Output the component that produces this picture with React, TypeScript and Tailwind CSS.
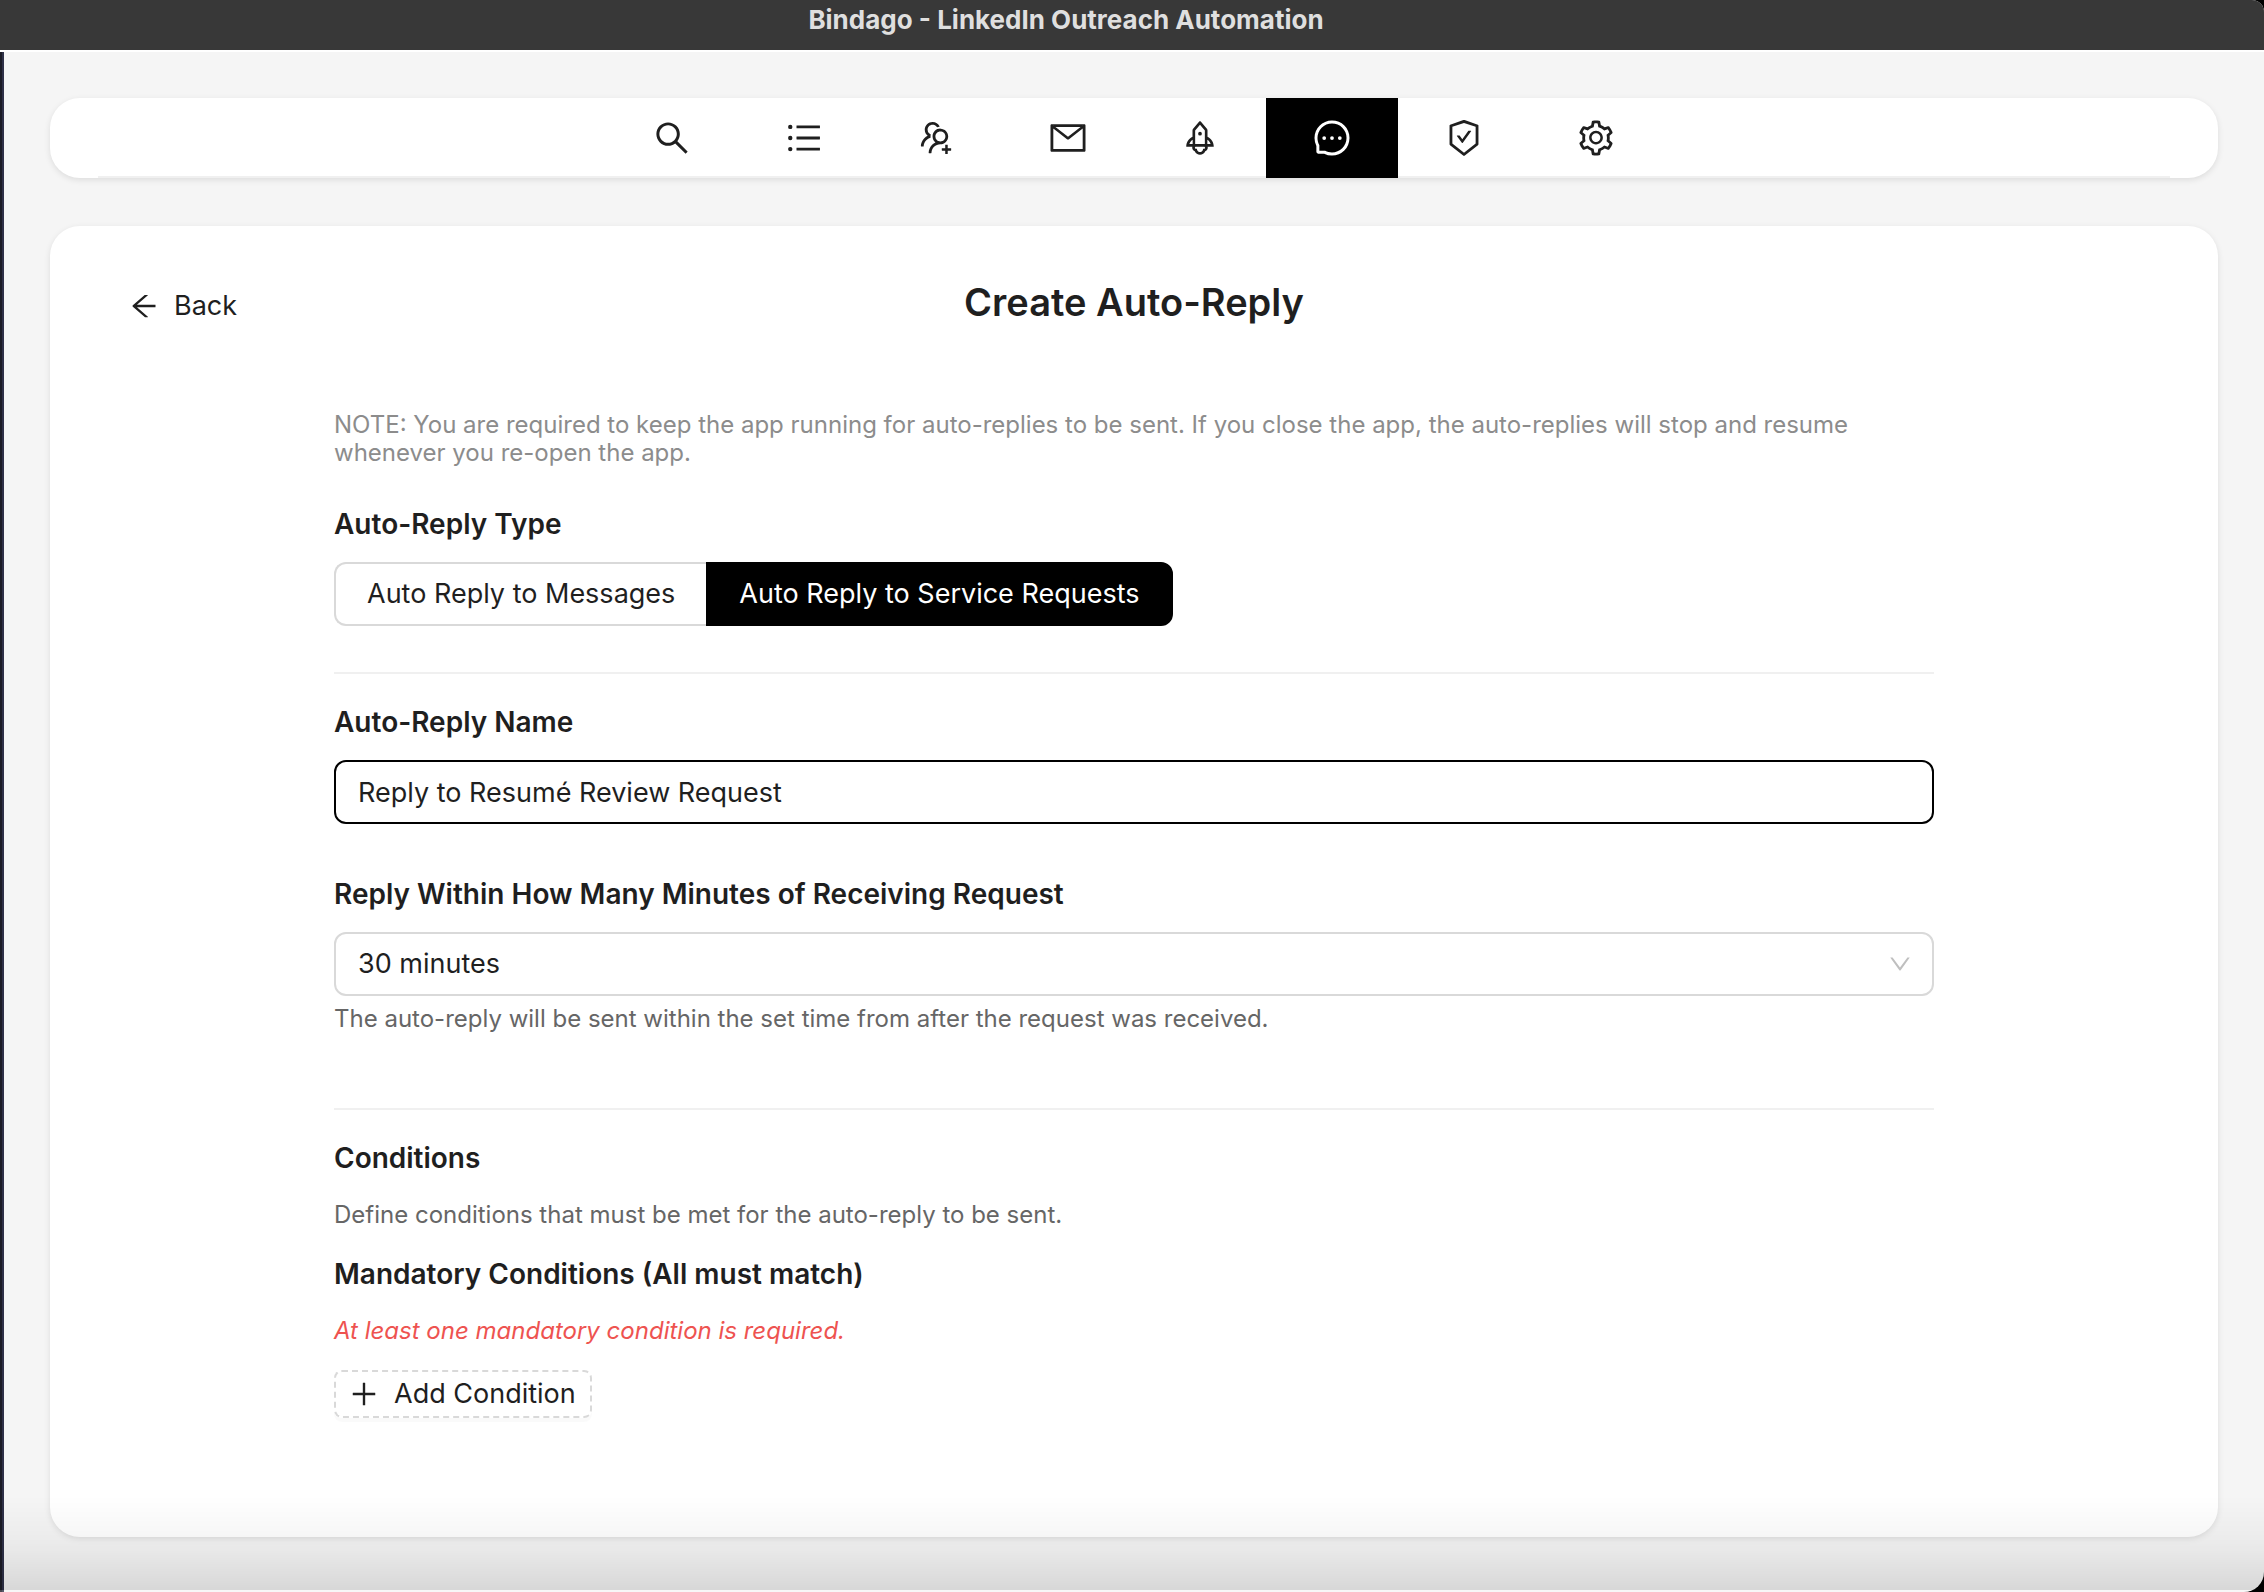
import { useState } from "react";
import type { ReactNode } from "react";
import {
  AiOutlineArrowLeft,
  AiOutlineDown,
  AiOutlineMail,
  AiOutlineMessage,
  AiOutlinePlus,
  AiOutlineRocket,
  AiOutlineSafetyCertificate,
  AiOutlineSearch,
  AiOutlineSetting,
  AiOutlineUnorderedList,
  AiOutlineUsergroupAdd,
} from "react-icons/ai";

const tabs = [
  { label: "Search", Icon: AiOutlineSearch },
  { label: "Lists", Icon: AiOutlineUnorderedList },
  { label: "Connections", Icon: AiOutlineUsergroupAdd },
  { label: "Mail", Icon: AiOutlineMail },
  { label: "Campaigns", Icon: AiOutlineRocket },
  { label: "Auto-Replies", Icon: AiOutlineMessage },
  { label: "Safety", Icon: AiOutlineSafetyCertificate },
  { label: "Settings", Icon: AiOutlineSetting },
];

function TopNav() {
  const [active, setActive] = useState("Auto-Replies");
  return (
    <nav className="rounded-[30px] bg-white px-12 shadow-[0_2px_6px_rgba(0,0,0,0.1)]">
      <div className="flex h-20 justify-center shadow-[inset_0_-2px_0_#f0f0f0]">
        {tabs.map(({ label, Icon }) => (
          <button
            key={label}
            type="button"
            aria-label={label}
            onClick={() => setActive(label)}
            className={
              label === active
                ? "flex w-33 items-center justify-center bg-black text-white"
                : "flex w-33 items-center justify-center text-[#1f1f1f]"
            }
          >
            <Icon className="size-10" />
          </button>
        ))}
      </div>
    </nav>
  );
}

function FieldLabel({ htmlFor, children }: { htmlFor: string; children: ReactNode }) {
  return (
    <label htmlFor={htmlFor} className="block text-[28px] leading-11 font-semibold">
      {children}
    </label>
  );
}

function TypeOption({ name, checked, onSelect }: { name: string; checked: boolean; onSelect: () => void }) {
  return (
    <label
      className={
        checked
          ? "flex items-center border-2 border-black bg-black px-[31px] text-white first:rounded-l-xl last:rounded-r-xl"
          : "flex items-center border-2 border-[#d9d9d9] bg-white px-[31px] first:rounded-l-xl first:border-r-0 last:rounded-r-xl last:border-l-0"
      }
    >
      <input type="radio" name="reply-type" className="sr-only" checked={checked} onChange={onSelect} />
      {name}
    </label>
  );
}

export default function App() {
  const types = ["Auto Reply to Messages", "Auto Reply to Service Requests"];
  const [type, setType] = useState(types[1]);
  const [name, setName] = useState("Reply to Resumé Review Request");

  return (
    <div className="bg-black font-['Inter',sans-serif] text-[27px] text-[#1f1f1f]">
      <div className="relative flex min-h-screen flex-col overflow-hidden rounded-tr-xl rounded-br-[20px] bg-[#f5f5f5]">
        <header className="flex h-[50px] justify-center bg-[#383838] pr-33 text-[26px] leading-10 font-bold text-[#dfdfdf]">
          Bindago - LinkedIn Outreach Automation
        </header>

        <div className="flex flex-1 flex-col gap-12 border-t-2 border-white pt-[46px] pr-[46px] pb-[55px] pl-[50px]">
          <TopNav />

          <main className="flex-1 rounded-[30px] bg-white px-[78px] pt-11 shadow-[0_2px_6px_rgba(0,0,0,0.1)]">
            <div className="grid grid-cols-3 items-center">
              <button type="button" className="mt-2 flex items-center gap-3.5 justify-self-start">
                <AiOutlineArrowLeft className="size-8" />
                Back
              </button>
              <h1 className="text-center text-[38px] leading-16 font-semibold">Create Auto-Reply</h1>
            </div>

            <div className="mx-auto mt-[77px] max-w-[1600px]">
              <p className="text-2xl leading-7 text-[#8c8c8c]">
                NOTE: You are required to keep the app running for auto-replies to be sent. If you close the app, the
                auto-replies will stop and resume whenever you re-open the app.
              </p>

              <fieldset className="mt-[35px]">
                <legend className="text-[28px] leading-11 font-semibold">Auto-Reply Type</legend>
                <div className="mt-4 flex h-16">
                  {types.map((t) => (
                    <TypeOption key={t} name={t} checked={t === type} onSelect={() => setType(t)} />
                  ))}
                </div>
              </fieldset>

              <hr className="mt-[46px] mb-[26px] border-t-2 border-[#f0f0f0]" />

              <FieldLabel htmlFor="name">Auto-Reply Name</FieldLabel>
              <input
                id="name"
                type="text"
                value={name}
                onChange={(e) => setName(e.target.value)}
                className="mt-4 block h-16 w-full rounded-xl border-2 border-black px-[22px] outline-none"
              />

              <div className="mt-12">
                <FieldLabel htmlFor="minutes">Reply Within How Many Minutes of Receiving Request</FieldLabel>
              </div>
              <div className="relative mt-4">
                <select
                  id="minutes"
                  className="block h-16 w-full appearance-none rounded-xl border-2 border-[#d9d9d9] bg-white px-[22px]"
                >
                  <option>30 minutes</option>
                </select>
                <AiOutlineDown className="pointer-events-none absolute top-[19px] right-[21px] size-[26px] text-[#bfbfbf]" />
              </div>
              <p className="mt-[3px] text-2xl leading-10 text-[#666666]">
                The auto-reply will be sent within the set time from after the request was received.
              </p>

              <hr className="mt-[69px] mb-[26px] border-t-2 border-[#f0f0f0]" />

              <h2 className="text-[28px] leading-11 font-semibold">Conditions</h2>
              <p className="mt-[15px] text-2xl leading-10 text-[#666666]">
                Define conditions that must be met for the auto-reply to be sent.
              </p>
              <h3 className="mt-[17px] text-[28px] leading-11 font-semibold">Mandatory Conditions (All must match)</h3>
              <p className="mt-[15px] text-2xl leading-10 text-[#ee5350] italic">
                At least one mandatory condition is required.
              </p>
              <button
                type="button"
                className="mt-[19px] flex h-12 items-center gap-3.5 rounded-lg border-2 border-dashed border-[#d9d9d9] pr-3.5 pl-3 shadow-[0_4px_0_rgba(0,0,0,0.02)]"
              >
                <AiOutlinePlus className="size-8" />
                Add Condition
              </button>
            </div>
          </main>
        </div>

        <div className="pointer-events-none absolute inset-y-0 left-0 mt-[52px] w-1 border-r-2 border-[#2e3047] bg-[#1b1b26]" />
        <div className="pointer-events-none absolute inset-x-0 bottom-0 h-24 border-b-2 border-white/20 bg-linear-to-b from-black/0 via-black/4 to-black/12" />
      </div>
    </div>
  );
}
